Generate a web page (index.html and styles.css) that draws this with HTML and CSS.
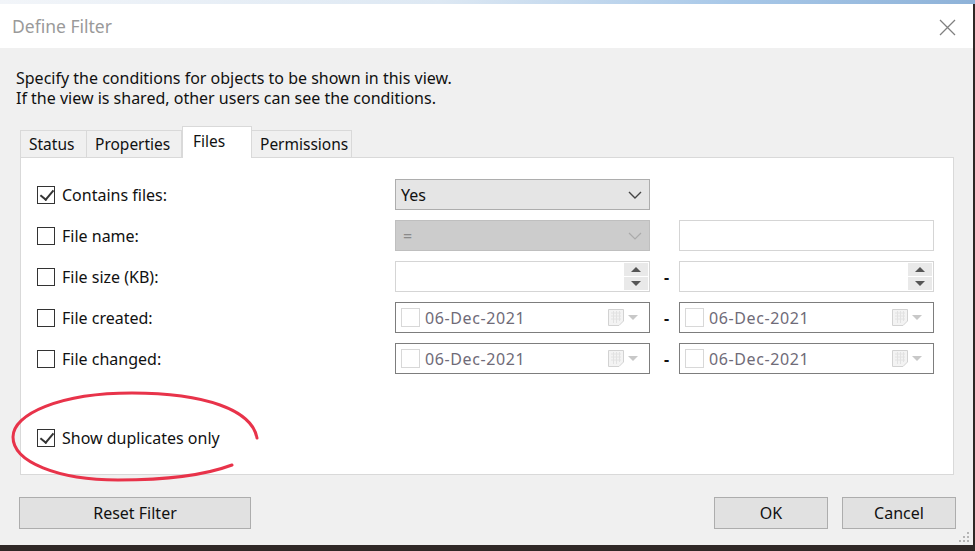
FILE: index.html
```html
<!DOCTYPE html>
<html lang="en-US">

<head>
    <meta charset="UTF-8">
    <meta name="viewport" content="width=device-width, initial-scale=1">
    <title>Define Filter</title>
    <link rel="stylesheet" href="styles.css">
</head>

<body>
    <div class="desktop-strip"></div>
    <div class="dialog">
        <div class="titlebar">
            <span class="title">Define Filter</span>
            <button class="close-btn" aria-label="Close">
                <svg width="17" height="17" viewBox="0 0 17 17">
                    <path d="M1 1 L16 16 M16 1 L1 16" stroke="#808080" stroke-width="1.3" fill="none"/>
                </svg>
            </button>
        </div>

        <div class="content">
            <p class="intro">
                Specify the conditions for objects to be shown in this view.<br>
                If the view is shared, other users can see the conditions.
            </p>

            <div class="tabs">
                <div class="tab">Status</div>
                <div class="tab">Properties</div>
                <div class="tab tab-active">Files</div>
                <div class="tab">Permissions</div>
            </div>

            <div class="tab-panel">
                <div class="filter-grid">
                    <label class="check-label"><span class="checkbox checked"></span>Contains files:</label>
                    <div class="select">
                        <span>Yes</span>
                        <svg class="chevron" width="14" height="8" viewBox="0 0 14 8"><path d="M1 1 L7 7 L13 1" stroke="#444" stroke-width="1.4" fill="none"/></svg>
                    </div>
                    <div></div>
                    <div></div>

                    <label class="check-label"><span class="checkbox"></span>File name:</label>
                    <div class="select select-disabled">
                        <span>=</span>
                        <svg class="chevron" width="14" height="8" viewBox="0 0 14 8"><path d="M1 1 L7 7 L13 1" stroke="#aaa" stroke-width="1.2" fill="none"/></svg>
                    </div>
                    <div></div>
                    <div class="text-input"></div>

                    <label class="check-label"><span class="checkbox"></span>File size (KB):</label>
                    <div class="spin-input">
                        <div class="spin-btns">
                            <div class="spin-half"><div class="tri tri-up"></div></div>
                            <div class="spin-half"><div class="tri tri-down"></div></div>
                        </div>
                    </div>
                    <div class="dash">-</div>
                    <div class="spin-input">
                        <div class="spin-btns">
                            <div class="spin-half"><div class="tri tri-up"></div></div>
                            <div class="spin-half"><div class="tri tri-down"></div></div>
                        </div>
                    </div>

                    <label class="check-label"><span class="checkbox"></span>File created:</label>
                    <div class="date-picker">
                        <span class="date-check"></span>
                        <span class="date-text">06-Dec-2021</span>
                        <svg class="cal-icon" width="16" height="17" viewBox="0 0 16 17"><path d="M0.5 0.5 H15.5 V12 L11 16.5 H0.5 Z" fill="#f3f3f3" stroke="#d2d2d2"/><path d="M3 4 H13 M3 7 H13 M3 10 H13 M5.5 2 V14 M8.5 2 V14 M11.5 2 V12" stroke="#e2e2e2"/></svg>
                        <div class="tri tri-down tri-light"></div>
                    </div>
                    <div class="dash">-</div>
                    <div class="date-picker">
                        <span class="date-check"></span>
                        <span class="date-text">06-Dec-2021</span>
                        <svg class="cal-icon" width="16" height="17" viewBox="0 0 16 17"><path d="M0.5 0.5 H15.5 V12 L11 16.5 H0.5 Z" fill="#f3f3f3" stroke="#d2d2d2"/><path d="M3 4 H13 M3 7 H13 M3 10 H13 M5.5 2 V14 M8.5 2 V14 M11.5 2 V12" stroke="#e2e2e2"/></svg>
                        <div class="tri tri-down tri-light"></div>
                    </div>

                    <label class="check-label"><span class="checkbox"></span>File changed:</label>
                    <div class="date-picker">
                        <span class="date-check"></span>
                        <span class="date-text">06-Dec-2021</span>
                        <svg class="cal-icon" width="16" height="17" viewBox="0 0 16 17"><path d="M0.5 0.5 H15.5 V12 L11 16.5 H0.5 Z" fill="#f3f3f3" stroke="#d2d2d2"/><path d="M3 4 H13 M3 7 H13 M3 10 H13 M5.5 2 V14 M8.5 2 V14 M11.5 2 V12" stroke="#e2e2e2"/></svg>
                        <div class="tri tri-down tri-light"></div>
                    </div>
                    <div class="dash">-</div>
                    <div class="date-picker">
                        <span class="date-check"></span>
                        <span class="date-text">06-Dec-2021</span>
                        <svg class="cal-icon" width="16" height="17" viewBox="0 0 16 17"><path d="M0.5 0.5 H15.5 V12 L11 16.5 H0.5 Z" fill="#f3f3f3" stroke="#d2d2d2"/><path d="M3 4 H13 M3 7 H13 M3 10 H13 M5.5 2 V14 M8.5 2 V14 M11.5 2 V12" stroke="#e2e2e2"/></svg>
                        <div class="tri tri-down tri-light"></div>
                    </div>
                </div>

                <label class="check-label duplicates"><span class="checkbox checked"></span>Show duplicates only</label>
            </div>

            <div class="buttons">
                <button class="btn btn-reset">Reset Filter</button>
                <div class="right-buttons">
                    <button class="btn">OK</button>
                    <button class="btn">Cancel</button>
                </div>
            </div>
        </div>

        <!-- hand drawn marker round the duplicates option -->
        <svg class="annotation" width="270" height="105" viewBox="0 385 270 105">
            <path d="M257 438 C252 410 205 393 132 393 C60 393 13 414 13 437 C13 462 58 480 118 480 C168 480 208 474 232 465"
                stroke="#e8334a" stroke-width="3" fill="none" stroke-linecap="round"/>
        </svg>

        <div class="gripper"></div>
    </div>
</body>

</html>
```

FILE: styles.css
```css
body,
html {
    margin: 0;
    height: 100%;
}

body {
    background: #2f2826;
    font-family: "Noto Sans", "Open Sans", sans-serif;
    font-size: 16px;
    color: #111;
    overflow: hidden;
}

.desktop-strip {
    height: 4px;
    background: linear-gradient(90deg, #f2f5f9 0%, #dde8f3 45%, #a8c8e8 75%, #8eb2d8 100%);
}

.dialog {
    position: relative;
    width: 973px;
    height: 541px;
    background: #f0f0f0;
}

.titlebar {
    height: 44px;
    background: #fff;
    display: flex;
    align-items: center;
    justify-content: space-between;
    padding: 0 17px 0 12px;
}

.title {
    color: #9a9a9a;
    font-size: 17.5px;
}

.close-btn {
    border: none;
    background: none;
    padding: 0;
    margin-top: 2px;
    display: flex;
}

.content {
    padding-left: 16px;
}

.intro {
    margin: 0;
    padding-top: 20px;
    line-height: 20px;
}

.tabs {
    display: flex;
    align-items: flex-end;
    margin: 18px 0 0 4px;
    height: 31px;
}

.tab {
    height: 27px;
    box-sizing: border-box;
    border: 1px solid #d9d9d9;
    border-bottom: none;
    border-left: none;
    padding: 2px 0 0 8px;
    background: #f0f0f0;
    font-size: 15.5px;
}

.tab:first-child {
    border-left: 1px solid #d9d9d9;
}

.tab:nth-child(1) { width: 67px; }
.tab:nth-child(2) { width: 95px; }
.tab:nth-child(4) { width: 100px; }

.tab-active {
    width: 70px;
    height: 32px;
    margin-bottom: -1px;
    background: #fff;
    border-left: 1px solid #d9d9d9;
    padding: 3px 0 0 10px;
    position: relative;
    z-index: 1;
}

.tab-active + .tab {
    border-left: none;
}

.tab-panel {
    margin-left: 4px;
    width: 934px;
    height: 318px;
    box-sizing: border-box;
    border: 1px solid #d9d9d9;
    background: #fff;
    padding: 21px 0 0 16px;
}

.filter-grid {
    display: grid;
    grid-template-columns: 358px 255px 29px 255px;
    grid-auto-rows: 31px;
    row-gap: 10px;
    align-items: stretch;
}

.check-label {
    display: flex;
    align-items: center;
    gap: 7px;
}

.checkbox {
    width: 18px;
    height: 18px;
    box-sizing: border-box;
    border: 1px solid #333;
    position: relative;
    background: #fff;
}

.checked::after {
    content: "";
    position: absolute;
    left: 5px;
    top: 0;
    width: 6px;
    height: 11px;
    border: solid #333;
    border-width: 0 2px 2px 0;
    transform: rotate(40deg);
}

.select {
    box-sizing: border-box;
    border: 1px solid #adadad;
    background: #e5e5e5;
    display: flex;
    align-items: center;
    justify-content: space-between;
    padding: 0 7px 0 5px;
}

.select-disabled {
    background: #cccccc;
    border-color: #bfbfbf;
    color: #8a8a8a;
    padding-left: 7px;
}

.text-input {
    box-sizing: border-box;
    border: 1px solid #d5d5d5;
    background: #fff;
}

.spin-input {
    box-sizing: border-box;
    border: 1px solid #d5d5d5;
    background: #fff;
    display: flex;
    justify-content: flex-end;
    padding: 1px 1px 1px 0;
}

.spin-btns {
    width: 24px;
    display: flex;
    flex-direction: column;
    gap: 1px;
}

.spin-half {
    flex: 1;
    background: #e9e9e9;
    display: flex;
    align-items: center;
    justify-content: center;
}

.tri {
    width: 0;
    height: 0;
    border-left: 5px solid transparent;
    border-right: 5px solid transparent;
}

.tri-up {
    border-bottom: 5px solid #555;
}

.tri-down {
    border-top: 5px solid #555;
}

.tri-light {
    border-top-color: #c8c8c8;
}

.dash {
    display: flex;
    align-items: center;
    padding-left: 14px;
    font-weight: bold;
}

.date-picker {
    box-sizing: border-box;
    border: 1px solid #7d7d7d;
    background: #fff;
    display: flex;
    align-items: center;
    padding: 0 11px 0 5px;
}

.date-check {
    width: 19px;
    height: 19px;
    box-sizing: border-box;
    border: 1px solid #d8d8d8;
    margin-right: 5px;
}

.date-text {
    color: #6f6b78;
    flex: 1;
    letter-spacing: 0.6px;
}

.cal-icon {
    margin-right: 4px;
}

.duplicates {
    margin-top: 53px;
}

.buttons {
    display: flex;
    justify-content: space-between;
    width: 937px;
    margin: 22px 0 0 3px;
}

.right-buttons {
    display: flex;
    gap: 14px;
}

.btn {
    height: 32px;
    width: 114px;
    border: 1px solid #adadad;
    background: #e1e1e1;
    font-family: inherit;
    font-size: 16px;
    color: #111;
    padding: 0;
}

.btn-reset {
    width: 232px;
}

.annotation {
    position: absolute;
    left: 0;
    top: 381px;
}

.gripper {
    position: absolute;
    right: 3px;
    bottom: 2px;
    width: 12px;
    height: 12px;
    background:
        radial-gradient(circle, #b5b5b5 1.2px, transparent 1.4px) 8px 0 / 4px 4px no-repeat,
        radial-gradient(circle, #b5b5b5 1.2px, transparent 1.4px) 4px 4px / 4px 4px no-repeat,
        radial-gradient(circle, #b5b5b5 1.2px, transparent 1.4px) 8px 4px / 4px 4px no-repeat,
        radial-gradient(circle, #b5b5b5 1.2px, transparent 1.4px) 0 8px / 4px 4px no-repeat,
        radial-gradient(circle, #b5b5b5 1.2px, transparent 1.4px) 4px 8px / 4px 4px no-repeat,
        radial-gradient(circle, #b5b5b5 1.2px, transparent 1.4px) 8px 8px / 4px 4px no-repeat;
}
```
